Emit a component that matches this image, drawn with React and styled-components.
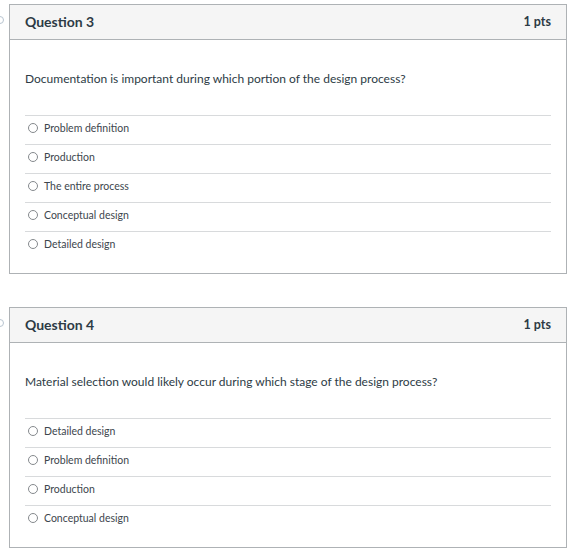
import React from "react";
import styled, { createGlobalStyle } from "styled-components";

const Global = createGlobalStyle`
  html, body { margin: 0; padding: 0; background: #fff; }
  body { font-family: Lato, "Open Sans", "Liberation Sans", sans-serif; color: #2d3b45; }
`;

const Page = styled.div`
  position: relative;
  padding: 4px 1px 0 9px;
  width: 558px;
`;

const Card = styled.div`
  position: relative;
  border: 1px solid #aeb2b5;
  margin-bottom: 33px;
`;

const Marker = styled.div`
  position: absolute;
  left: -14px;
  top: 11px;
  width: 8px;
  height: 8px;
  border-radius: 50%;
  border: 1px solid #b8c4d0;
  box-sizing: border-box;
`;

const Header = styled.div`
  display: flex;
  align-items: center;
  justify-content: space-between;
  height: 35px;
  padding: 0 15px 1px;
  box-sizing: border-box;
  background: #f5f5f5;
  border-bottom: 1px solid #aeb2b5;
  font-weight: 700;
`;

const Title = styled.span`
  font-size: 14px;
`;

const Points = styled.span`
  font-size: 12.5px;
`;

const Body = styled.div`
  padding: 30px 15px 13px 15px;
`;

const Prompt = styled.div`
  font-size: 12px;
  line-height: 18px;
  margin-bottom: 27px;
`;

const Answer = styled.label`
  display: flex;
  align-items: center;
  height: 29px;
  padding: 0 0 4px 3px;
  box-sizing: border-box;
  border-top: 1px solid #d8dadc;
  font-size: 10.5px;
  color: #3d464d;
`;

const Radio = styled.span`
  width: 10px;
  height: 10px;
  border-radius: 50%;
  border: 1px solid #85898d;
  box-sizing: border-box;
  margin-right: 6px;
  flex: none;
`;

const questions = [
  {
    n: 3,
    prompt: "Documentation is important during which portion of the design process?",
    answers: ["Problem definition", "Production", "The entire process", "Conceptual design", "Detailed design"],
  },
  {
    n: 4,
    prompt: "Material selection would likely occur during which stage of the design process?",
    answers: ["Detailed design", "Problem definition", "Production", "Conceptual design"],
  },
];

export default function App() {
  return (
    <Page>
      <Global />
      {questions.map((q) => (
        <Card key={q.n}>
          <Marker />
          <Header>
            <Title>Question {q.n}</Title>
            <Points>1 pts</Points>
          </Header>
          <Body>
            <Prompt>{q.prompt}</Prompt>
            {q.answers.map((a) => (
              <Answer key={a}>
                <Radio />
                {a}
              </Answer>
            ))}
          </Body>
        </Card>
      ))}
    </Page>
  );
}
